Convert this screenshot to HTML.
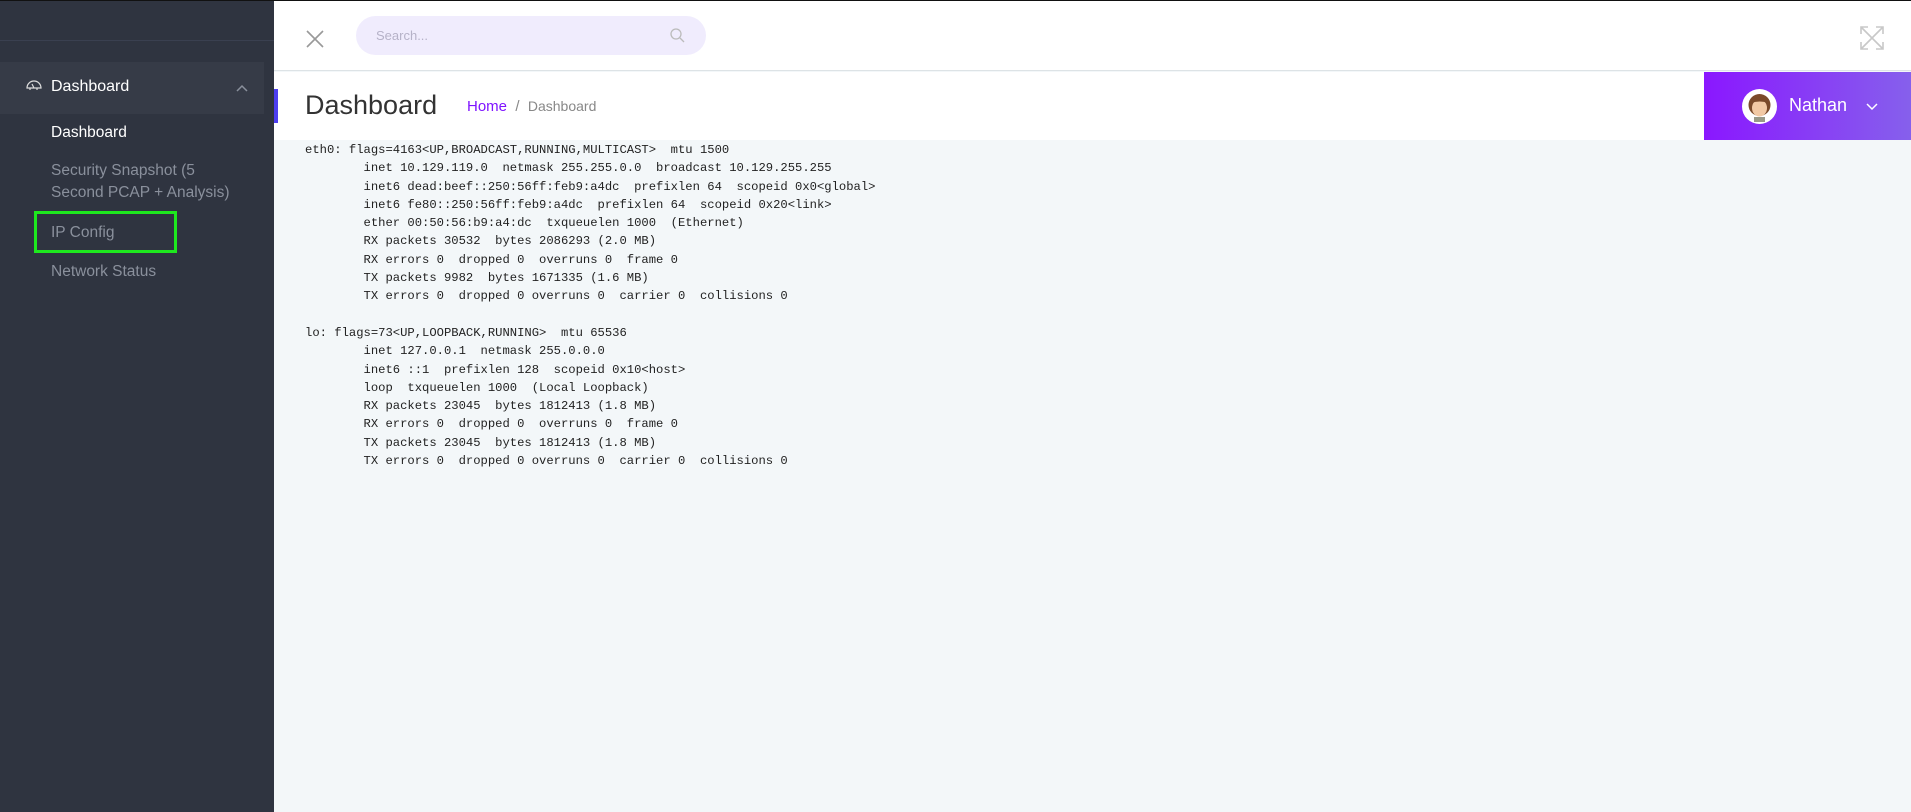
<!DOCTYPE html>
<html><head><meta charset="utf-8">
<style>
*{margin:0;padding:0;box-sizing:border-box}
body{width:1911px;height:812px;overflow:hidden;background:#f3f7f9;font-family:"Liberation Sans",sans-serif;position:relative}
.top{position:absolute;left:0;top:0;width:1911px;height:1px;background:#111}
.side{position:absolute;left:0;top:1px;width:274px;height:811px;background:#2f3440}
.side .line{position:absolute;left:0;top:39px;width:274px;height:1px;background:#3a4050}
.side .row{position:absolute;left:0;top:61px;width:264px;height:52px;background:#363b47}
.side .row span{position:absolute;left:51px;top:16px;color:#fff;font-size:16px}
.side .sub{position:absolute;left:51px;font-size:15.5px;color:#8a909c;line-height:27px}
.hdr{position:absolute;left:274px;top:1px;width:1637px;height:70px;background:#fff;border-bottom:1px solid #dde3e6}
.search{position:absolute;left:356px;top:16px;width:350px;height:39px;border-radius:20px;background:#f0ecfd}
.search span{position:absolute;left:20px;top:12px;font-size:13px;color:#b6b2c8}
.tbar{position:absolute;left:274px;top:72px;width:1637px;height:68px;background:#fff}
.acc{position:absolute;left:274px;top:89px;width:4px;height:34px;background:#4d3ef0}
.title{position:absolute;left:305px;top:90px;font-size:27px;color:#333}
.bc{position:absolute;left:467px;top:98px;font-size:15px;color:#888}
.bc b{font-weight:normal;color:#7e13ff}
.user{position:absolute;left:1704px;top:72px;width:207px;height:68px;background:linear-gradient(90deg,#8a17ff,#8660ec)}
.user .nm{position:absolute;left:85px;top:23px;color:#fff;font-size:18px}
pre{position:absolute;left:305px;top:141px;font-family:"Liberation Mono",monospace;font-size:12.2px;line-height:18.3px;color:#222}
</style></head><body>
<div class="top"></div>
<div class="side">
 <div class="line"></div>
 <div class="row">
  <svg style="position:absolute;left:26px;top:17px" width="16" height="14" viewBox="0 0 16 14" fill="none" stroke="#ddd" stroke-width="1.2"><path d="M1 9a7 7 0 0 1 14 0z M8 9 L6 5 M4 9v2 M11 9v2"/></svg>
  <span>Dashboard</span>
  <svg style="position:absolute;left:236px;top:22px" width="12" height="8" viewBox="0 0 12 8" fill="none" stroke="#8a909c" stroke-width="1.5"><path d="M1 7l5-5 5 5"/></svg>
 </div>
 <div class="sub" style="top:118px;color:#fff">Dashboard</div>
 <div class="sub" style="top:159px;line-height:22px">Security Snapshot (5<br>Second PCAP + Analysis)</div>
 <div class="sub" style="top:218px">IP Config</div>
 <div class="sub" style="top:257px">Network Status</div>
 <div style="position:absolute;left:34px;top:210px;width:143px;height:42px;border:3px solid #1ee81e"></div>
</div>
<div class="hdr">
 <svg style="position:absolute;left:32px;top:29px" width="18" height="18" viewBox="0 0 18 18" stroke="#999" stroke-width="1.6"><path d="M1 1L17 17M17 1L1 17"/></svg>
 <svg style="position:absolute;left:1585px;top:24px" width="26" height="26" viewBox="0 0 26 26" fill="none" stroke="#c8c8c8" stroke-width="1.6"><path d="M2 2l22 22M24 2L2 24M2 9V2h7M17 2h7v7M24 17v7h-7M9 24H2v-7"/></svg>
</div>
<div class="search"><span>Search...</span>
 <svg style="position:absolute;left:314px;top:12px" width="15" height="15" viewBox="0 0 15 15" fill="none" stroke="#bbb" stroke-width="1.3"><circle cx="6" cy="6" r="5"/><path d="M10 10l4 4"/></svg>
</div>
<div class="tbar"></div>
<div class="acc"></div>
<div class="title">Dashboard</div>
<div class="bc"><b>Home</b> &nbsp;/&nbsp; <span style="font-size:14px">Dashboard</span></div>
<div class="user">
 <svg style="position:absolute;left:38px;top:17px" width="35" height="35" viewBox="0 0 35 35"><circle cx="17.5" cy="17.5" r="17.5" fill="#fff"/><circle cx="17.5" cy="16" r="11" fill="#7a4a2a"/><ellipse cx="17.5" cy="19" rx="7.5" ry="8.5" fill="#f2c9a4"/><path d="M9 14q8-9 17 0q-8-3-17 0z" fill="#7a4a2a"/><rect x="12" y="28" width="11" height="5" fill="#998" /></svg>
 <span class="nm">Nathan</span>
 <svg style="position:absolute;left:162px;top:31px" width="12" height="8" viewBox="0 0 12 8" fill="none" stroke="#fff" stroke-width="1.5"><path d="M1 1l5 5 5-5"/></svg>
</div>
<pre>eth0: flags=4163&lt;UP,BROADCAST,RUNNING,MULTICAST&gt;  mtu 1500
        inet 10.129.119.0  netmask 255.255.0.0  broadcast 10.129.255.255
        inet6 dead:beef::250:56ff:feb9:a4dc  prefixlen 64  scopeid 0x0&lt;global&gt;
        inet6 fe80::250:56ff:feb9:a4dc  prefixlen 64  scopeid 0x20&lt;link&gt;
        ether 00:50:56:b9:a4:dc  txqueuelen 1000  (Ethernet)
        RX packets 30532  bytes 2086293 (2.0 MB)
        RX errors 0  dropped 0  overruns 0  frame 0
        TX packets 9982  bytes 1671335 (1.6 MB)
        TX errors 0  dropped 0 overruns 0  carrier 0  collisions 0

lo: flags=73&lt;UP,LOOPBACK,RUNNING&gt;  mtu 65536
        inet 127.0.0.1  netmask 255.0.0.0
        inet6 ::1  prefixlen 128  scopeid 0x10&lt;host&gt;
        loop  txqueuelen 1000  (Local Loopback)
        RX packets 23045  bytes 1812413 (1.8 MB)
        RX errors 0  dropped 0  overruns 0  frame 0
        TX packets 23045  bytes 1812413 (1.8 MB)
        TX errors 0  dropped 0 overruns 0  carrier 0  collisions 0
</pre>
</body></html>
